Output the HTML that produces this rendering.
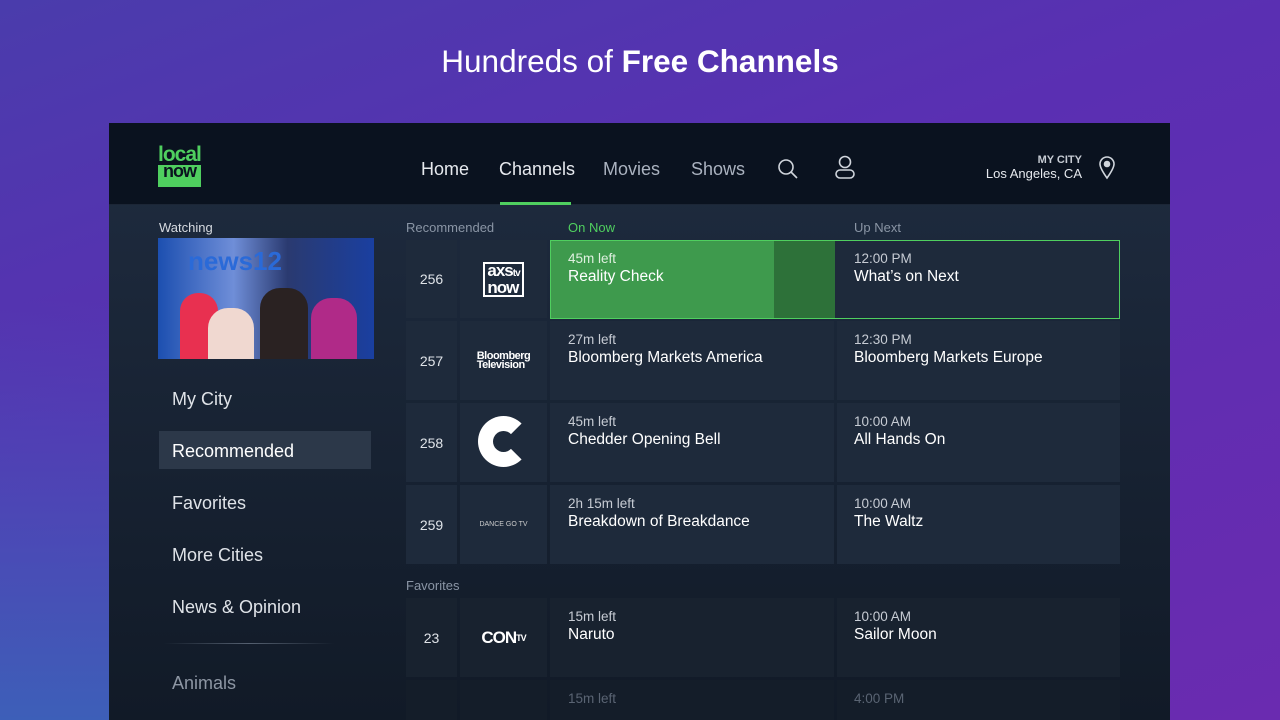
<!DOCTYPE html>
<html><head><meta charset="utf-8"><style>
*{margin:0;padding:0;box-sizing:border-box}
body{width:1280px;height:720px;overflow:hidden;font-family:"Liberation Sans",sans-serif;background:linear-gradient(160deg,#4a3cac 0%,#5a2fb2 40%,#6a2bb0 100%);position:relative;color:#fff}
.bgl{position:absolute;left:0;top:300px;width:200px;height:420px;background:linear-gradient(180deg,rgba(60,90,180,0),#3d5fb8)}
h1{position:absolute;top:43px;width:100%;text-align:center;font-weight:300;font-size:31.5px;color:#fff}
h1 b{font-weight:700}
.panel{position:absolute;left:109px;top:123px;width:1061px;height:597px;background:linear-gradient(180deg,#1f2c40,#111a27);overflow:hidden}
.hdr{position:absolute;left:0;top:0;width:1061px;height:82px;background:#0a121f;border-bottom:1px solid #1c2636}
.nav{position:absolute;top:36px;font-size:18px;color:#e6e9ee}
.a{position:absolute;font-size:13px}
.lbl{position:absolute;font-size:13px;color:#8a95a5}
.cell{position:absolute;background:#1e2a3b}
.num{font-size:14px;color:#dfe3e8;display:flex;align-items:center;justify-content:center}
.prog{padding:11px 18px}
.prog .t{font-size:13.5px;color:#c7ccd4}
.prog .n{font-size:15.5px;color:#fff;margin-top:2px}
.menu{position:absolute;left:63px;font-size:18px;color:#dfe3e8}
</style></head><body>
<div class="bgl"></div>
<h1>Hundreds of <b>Free Channels</b></h1>
<div class="panel">
 <div class="hdr">
  <div style="position:absolute;left:49px;top:23px;width:43px;height:42px">
   <div style="color:#4fcf5f;font-weight:700;font-size:21px;line-height:18px;letter-spacing:-1px">local</div>
   <div style="background:#4fcf5f;height:22px;margin-top:1px;color:#0a121f;font-weight:700;font-size:18px;line-height:13px;letter-spacing:-1px;text-align:center">now</div>
  </div>
  <div class="nav" style="left:312px">Home</div>
  <div class="nav" style="left:390px">Channels</div>
  <div style="position:absolute;left:391px;top:79px;width:71px;height:3px;background:#4fcf5f"></div>
  <div class="nav" style="left:494px;color:#aab2bf">Movies</div>
  <div class="nav" style="left:582px;color:#aab2bf">Shows</div>
  <svg style="position:absolute;left:668px;top:35px" width="22" height="22" viewBox="0 0 22 22" fill="none" stroke="#d0d5dc" stroke-width="1.6"><circle cx="9" cy="9" r="7"/><path d="M14 14l6 6"/></svg>
  <svg style="position:absolute;left:725px;top:32px" width="22" height="26" viewBox="0 0 22 26" fill="none" stroke="#d0d5dc" stroke-width="1.6"><circle cx="11" cy="7" r="5.5"/><rect x="2" y="15" width="18" height="8" rx="4"/></svg>
  <div style="position:absolute;right:88px;top:31px;text-align:right"><div style="font-size:11px;font-weight:700;color:#c7ccd4">MY CITY</div><div style="font-size:13px;color:#e6e9ee">Los Angeles, CA</div></div>
  <svg style="position:absolute;left:989px;top:33px" width="18" height="24" viewBox="0 0 18 24" fill="none" stroke="#d0d5dc" stroke-width="1.6"><path d="M9 22C4 15 2 11 2 8a7 7 0 0 1 14 0c0 3-2 7-7 14z"/><circle cx="9" cy="8" r="2.5" fill="#d0d5dc"/></svg>
 </div>
 <div class="a" style="left:50px;top:97px;color:#d6dae0">Watching</div>
 <div style="position:absolute;left:49px;top:115px;width:216px;height:121px;background:linear-gradient(90deg,#1c4fb0,#6f8ed8 35%,#2a3a70 60%,#1a3fa0);overflow:hidden">
  <div style="position:absolute;left:30px;top:8px;font-weight:700;font-size:26px;color:#2a6ad8">news12</div>
  <div style="position:absolute;left:22px;top:55px;width:38px;height:70px;border-radius:18px 18px 0 0;background:#e83050"></div>
  <div style="position:absolute;left:50px;top:70px;width:46px;height:60px;border-radius:20px 20px 0 0;background:#f0d8d0"></div>
  <div style="position:absolute;left:102px;top:50px;width:48px;height:80px;border-radius:20px 20px 0 0;background:#2a2222"></div>
  <div style="position:absolute;left:153px;top:60px;width:46px;height:70px;border-radius:20px 20px 0 0;background:#b02a88"></div>
 </div>
 <div class="menu" style="top:266px">My City</div>
 <div style="position:absolute;left:50px;top:308px;width:212px;height:38px;background:#2c3849"></div>
 <div class="menu" style="top:318px;color:#fff">Recommended</div>
 <div class="menu" style="top:370px">Favorites</div>
 <div class="menu" style="top:422px">More Cities</div>
 <div class="menu" style="top:474px">News &amp; Opinion</div>
 <div style="position:absolute;left:55px;top:520px;width:170px;height:1px;background:linear-gradient(90deg,transparent,#556070,transparent)"></div>
 <div class="menu" style="top:550px;color:#8d96a3">Animals</div>

 <div class="lbl" style="left:297px;top:97px">Recommended</div>
 <div class="lbl" style="left:459px;top:97px;color:#4fcf5f">On Now</div>
 <div class="lbl" style="left:745px;top:97px">Up Next</div>

 <div class="cell num" style="left:297px;top:117px;width:51px;height:78px">256</div>
 <div class="cell" style="left:351px;top:117px;width:87px;height:78px;display:flex;align-items:center;justify-content:center"><div style="border:2px solid #fff;padding:0 2px;font-weight:700;font-size:17px;line-height:14px;letter-spacing:-1px">axs<span style="font-size:10px">tv</span><br>now</div></div>
 <div style="position:absolute;left:441px;top:117px;width:570px;height:79px;border:1px solid #4fcf5f;background:#1e2a3b"></div>
 <div style="position:absolute;left:442px;top:118px;width:223px;height:77px;background:#3e9a4d"></div>
 <div style="position:absolute;left:665px;top:118px;width:61px;height:77px;background:#2d7139"></div>
 <div class="prog" style="position:absolute;left:441px;top:117px"><div class="t" style="color:#dff0e0">45m left</div><div class="n">Reality Check</div></div>
 <div class="prog" style="position:absolute;left:727px;top:117px"><div class="t">12:00 PM</div><div class="n">What’s on Next</div></div>

 <div class="cell num" style="left:297px;top:198px;width:51px;height:79px">257</div>
 <div class="cell" style="left:351px;top:198px;width:87px;height:79px;display:flex;align-items:center;justify-content:center;font-weight:700;font-size:11px;line-height:9px;letter-spacing:-.5px">Bloomberg<br>Television</div>
 <div class="cell prog" style="left:441px;top:198px;width:284px;height:79px"><div class="t">27m left</div><div class="n">Bloomberg Markets America</div></div>
 <div class="cell prog" style="left:728px;top:198px;width:283px;height:79px;padding-left:17px"><div class="t">12:30 PM</div><div class="n">Bloomberg Markets Europe</div></div>

 <div class="cell num" style="left:297px;top:280px;width:51px;height:79px">258</div>
 <div class="cell" style="left:351px;top:280px;width:87px;height:79px"><div style="position:absolute;left:18px;top:13px;width:51px;height:51px;border-radius:50%;border:15px solid #fff;border-right-color:transparent"></div></div>
 <div class="cell prog" style="left:441px;top:280px;width:284px;height:79px"><div class="t">45m left</div><div class="n">Chedder Opening Bell</div></div>
 <div class="cell prog" style="left:728px;top:280px;width:283px;height:79px;padding-left:17px"><div class="t">10:00 AM</div><div class="n">All Hands On</div></div>

 <div class="cell num" style="left:297px;top:362px;width:51px;height:79px">259</div>
 <div class="cell" style="left:351px;top:362px;width:87px;height:79px;display:flex;align-items:center;justify-content:center;font-size:7px;color:#ccc">DANCE GO TV</div>
 <div class="cell prog" style="left:441px;top:362px;width:284px;height:79px"><div class="t">2h 15m left</div><div class="n">Breakdown of Breakdance</div></div>
 <div class="cell prog" style="left:728px;top:362px;width:283px;height:79px;padding-left:17px"><div class="t">10:00 AM</div><div class="n">The Waltz</div></div>
 <div class="lbl" style="left:297px;top:455px">Favorites</div>

 <div class="cell num" style="left:297px;top:475px;width:51px;height:79px;background:#18222f">23</div>
 <div class="cell" style="left:351px;top:475px;width:87px;height:79px;background:#18222f;display:flex;align-items:center;justify-content:center;font-weight:900;font-size:17px;letter-spacing:-1px">CON<span style="font-size:9px">TV</span></div>
 <div class="cell prog" style="left:441px;top:475px;width:284px;height:79px;background:#18222f"><div class="t">15m left</div><div class="n">Naruto</div></div>
 <div class="cell prog" style="left:728px;top:475px;width:283px;height:79px;background:#18222f;padding-left:17px"><div class="t">10:00 AM</div><div class="n">Sailor Moon</div></div>

 <div class="cell" style="left:297px;top:557px;width:51px;height:40px;background:#141d29"></div>
 <div class="cell" style="left:351px;top:557px;width:87px;height:40px;background:#141d29"></div>
 <div class="cell prog" style="left:441px;top:557px;width:284px;height:40px;background:#141d29"><div class="t" style="color:#5a6473">15m left</div></div>
 <div class="cell prog" style="left:728px;top:557px;width:283px;height:40px;background:#141d29;padding-left:17px"><div class="t" style="color:#5a6473">4:00 PM</div></div>
</div>
</body></html>
